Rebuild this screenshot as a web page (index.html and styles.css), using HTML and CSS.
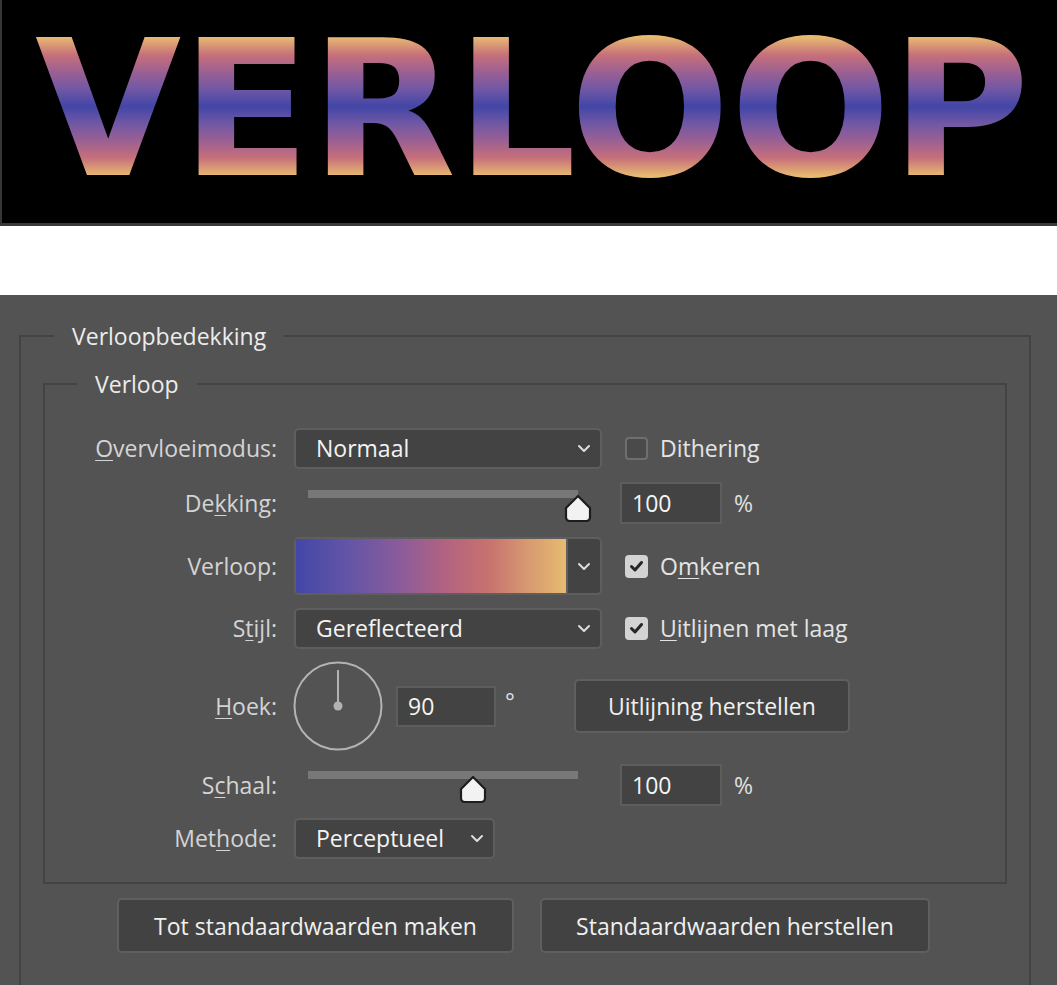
FILE: index.html
```html
<!DOCTYPE html>
<html lang="nl">
<head>
<meta charset="utf-8">
<title>Verloopbedekking</title>
<link rel="stylesheet" href="styles.css">
</head>
<body>
<header class="banner">
  <svg class="banner-title" width="1055" height="223" viewBox="0 0 1055 223">
    <defs>
      <linearGradient id="titleFill" gradientUnits="userSpaceOnUse" x1="0" y1="37" x2="0" y2="176">
        <stop offset="0" stop-color="#e8ba72"/>
        <stop offset="0.13" stop-color="#c6707a"/>
        <stop offset="0.25" stop-color="#9c6092"/>
        <stop offset="0.37" stop-color="#7358a4"/>
        <stop offset="0.5" stop-color="#4246a7"/>
        <stop offset="0.63" stop-color="#7358a4"/>
        <stop offset="0.75" stop-color="#9c6092"/>
        <stop offset="0.87" stop-color="#c6707a"/>
        <stop offset="1" stop-color="#e8ba72"/>
      </linearGradient>
    </defs>
    <text class="title-text" x="33" y="175">VERLOOP</text>
  </svg>
</header>

<div class="spacer"></div>

<main class="panel">
  <fieldset class="group outer">
    <legend>Verloopbedekking</legend>

    <fieldset class="group inner">
      <legend>Verloop</legend>

      <div class="rows">
        <!-- blend mode -->
        <span class="lbl"><u>O</u>vervloeimodus:</span>
        <div class="ctl">
          <div class="select wide">
            <span>Normaal</span>
            <svg class="chev" width="14" height="9" viewBox="0 0 14 9"><polyline points="2,2 7,7 12,2"/></svg>
          </div>
          <label class="check"><span class="box"></span><span>Dithering</span></label>
        </div>

        <!-- opacity -->
        <span class="lbl">De<u>k</u>king:</span>
        <div class="ctl">
          <div class="slider">
            <div class="track">
              <svg class="thumb" style="left: 100%" width="28" height="29" viewBox="0 0 28 29"><path d="M14 2 L26 14 L26 23 Q26 27 22 27 L6 27 Q2 27 2 23 L2 14 Z"/></svg>
            </div>
          </div>
          <div class="num">100</div>
          <span class="unit">%</span>
        </div>

        <!-- gradient -->
        <span class="lbl">Verloop:</span>
        <div class="ctl">
          <div class="gradient-pick">
            <div class="swatch"></div>
            <div class="pick-arrow">
              <svg class="chev" width="14" height="9" viewBox="0 0 14 9"><polyline points="2,2 7,7 12,2"/></svg>
            </div>
          </div>
          <label class="check"><span class="box on"><svg width="19" height="19" viewBox="0 0 19 19"><polyline points="4.5,9.5 8,13 14.5,5.5"/></svg></span><span>O<u>m</u>keren</span></label>
        </div>

        <!-- style -->
        <span class="lbl">S<u>t</u>ijl:</span>
        <div class="ctl">
          <div class="select wide">
            <span>Gereflecteerd</span>
            <svg class="chev" width="14" height="9" viewBox="0 0 14 9"><polyline points="2,2 7,7 12,2"/></svg>
          </div>
          <label class="check"><span class="box on"><svg width="19" height="19" viewBox="0 0 19 19"><polyline points="4.5,9.5 8,13 14.5,5.5"/></svg></span><span><u>U</u>itlijnen met laag</span></label>
        </div>

        <!-- angle -->
        <span class="lbl"><u>H</u>oek:</span>
        <div class="ctl">
          <svg class="dial" width="90" height="90" viewBox="0 0 90 90">
            <circle cx="45" cy="45" r="43.5"/>
            <line x1="45" y1="45" x2="45" y2="9"/>
            <circle class="hub" cx="45" cy="45" r="4.5"/>
          </svg>
          <div class="num angle">90</div>
          <span class="deg">°</span>
          <button class="btn realign" type="button">Uitlijning herstellen</button>
        </div>

        <!-- scale -->
        <span class="lbl">S<u>c</u>haal:</span>
        <div class="ctl">
          <div class="slider scale">
            <div class="track">
              <svg class="thumb" style="left: 61%" width="28" height="29" viewBox="0 0 28 29"><path d="M14 2 L26 14 L26 23 Q26 27 22 27 L6 27 Q2 27 2 23 L2 14 Z"/></svg>
            </div>
          </div>
          <div class="num">100</div>
          <span class="unit">%</span>
        </div>

        <!-- method -->
        <span class="lbl">Met<u>h</u>ode:</span>
        <div class="ctl">
          <div class="select narrow">
            <span>Perceptueel</span>
            <svg class="chev" width="14" height="9" viewBox="0 0 14 9"><polyline points="2,2 7,7 12,2"/></svg>
          </div>
        </div>
      </div>
    </fieldset>

    <div class="actions">
      <button class="btn wide-1" type="button">Tot standaardwaarden maken</button>
      <button class="btn wide-2" type="button">Standaardwaarden herstellen</button>
    </div>
  </fieldset>
</main>
</body>
</html>
```

FILE: styles.css
```css
* {
  box-sizing: border-box;
}

html,
body {
  margin: 0;
}

body {
  width: 1057px;
  background: #ffffff;
  font-family: "Open Sans", "Noto Sans", sans-serif;
}

/* title banner */
.banner {
  height: 226px;
  background: #000000;
  border-left: 2px solid #363636;
  border-bottom: 3px solid #3a3a3a;
}

.banner-title {
  display: block;
}

.title-text {
  font-family: "DejaVu Sans", sans-serif;
  font-weight: bold;
  font-size: 189px;
  fill: url(#titleFill);
}

.spacer {
  height: 69px;
}

/* dialog panel */
.panel {
  height: 690px;
  overflow: hidden;
  background: #535353;
  padding: 25px 0 0 19px;
  color: #d4d4d4;
  font-size: 23px;
}

.group {
  margin: 0;
  min-width: 0;
  border: 2px solid #434343;
}

.group > legend {
  line-height: 32px;
  padding: 0 18px;
  color: #ececec;
}

.outer {
  width: 1012px;
  padding: 16px 22px 40px 22px;
}

.outer > legend {
  margin-left: 11px;
}

.inner {
  padding: 27px 0 24px 0;
  margin: 0 0 14px 0;
}

.inner > legend {
  margin-left: 32px;
}

.rows {
  display: grid;
  grid-template-columns: 232px 1fr;
  grid-template-rows: 42px 42px 58px 40px 90px 41px 40px;
  column-gap: 17px;
  row-gap: 13px;
}

.lbl {
  align-self: center;
  text-align: right;
  white-space: nowrap;
  line-height: 30px;
}

u {
  text-decoration-thickness: 1px;
  text-underline-offset: 3px;
}

.ctl {
  display: flex;
  align-items: center;
}

/* dropdowns */
.select {
  height: 41px;
  display: flex;
  align-items: center;
  justify-content: space-between;
  padding: 0 9px 0 20px;
  background: #434343;
  border: 2px solid #5e5e5e;
  border-radius: 5px;
  color: #f3f3f3;
}

.select.wide {
  width: 308px;
}

.select.narrow {
  width: 201px;
}

.chev {
  display: block;
  fill: none;
  stroke: #dedede;
  stroke-width: 2;
  stroke-linecap: round;
  stroke-linejoin: round;
}

/* checkboxes */
.check {
  display: flex;
  align-items: center;
  gap: 12px;
  margin-left: 23px;
  color: #e4e4e4;
  white-space: nowrap;
}

.box {
  width: 23px;
  height: 23px;
  flex: none;
  display: flex;
  align-items: center;
  justify-content: center;
  background: #4a4a4a;
  border: 2px solid #6f6f6f;
  border-radius: 4px;
}

.box.on {
  background: #d3d3d3;
  border-color: #d3d3d3;
}

.box svg {
  fill: none;
  stroke: #262626;
  stroke-width: 3;
  stroke-linecap: round;
  stroke-linejoin: round;
}

/* sliders */
.slider {
  width: 308px;
  height: 100%;
  padding: 8px 24px 0 14px;
}

.slider.scale {
  padding-top: 7px;
}

.track {
  position: relative;
  height: 8px;
  background: #787878;
}

.thumb {
  position: absolute;
  top: 4px;
  transform: translateX(-50%);
  fill: #f2f2f2;
  stroke: #1d1d1d;
  stroke-width: 2.2;
  stroke-linejoin: round;
}

/* numeric fields */
.num {
  width: 102px;
  height: 42px;
  margin-left: 18px;
  display: flex;
  align-items: center;
  padding-left: 10px;
  background: #434343;
  border: 2px solid #5d5d5d;
  color: #f4f4f4;
}

.unit {
  margin-left: 12px;
  color: #e0e0e0;
}

/* gradient picker */
.gradient-pick {
  width: 308px;
  height: 58px;
  display: flex;
  overflow: hidden;
  background: #434343;
  border: 2px solid #5e5e5e;
  border-radius: 5px;
}

.swatch {
  width: 270px;
  background: linear-gradient(90deg, #4347a7 0%, #6455a6 20%, #8a5b9b 38%, #b3637f 56%, #c8736f 72%, #d79a71 86%, #e7ba70 100%);
}

.pick-arrow {
  flex: 1;
  display: flex;
  align-items: center;
  justify-content: center;
  border-left: 2px solid #5e5e5e;
}

/* angle dial */
.dial {
  display: block;
  margin-left: -1px;
  flex: none;
}

.dial circle,
.dial line {
  fill: none;
  stroke: #b3b3b3;
  stroke-width: 2;
}

.dial .hub {
  fill: #b3b3b3;
  stroke: none;
}

.num.angle {
  width: 100px;
  height: 41px;
  margin-left: 13px;
}

.deg {
  align-self: flex-start;
  margin: 24px 0 0 9px;
  color: #e0e0e0;
}

/* buttons */
.btn {
  height: 55px;
  padding: 0;
  font: inherit;
  color: #f0f0f0;
  background: #424242;
  border: 2px solid #5f5f5f;
  border-radius: 5px;
}

.realign {
  width: 276px;
  height: 54px;
  margin-left: 59px;
}

.actions {
  display: flex;
  justify-content: center;
  gap: 26px;
  margin-left: -3px;
}

.wide-1 {
  width: 397px;
}

.wide-2 {
  width: 390px;
}
```
